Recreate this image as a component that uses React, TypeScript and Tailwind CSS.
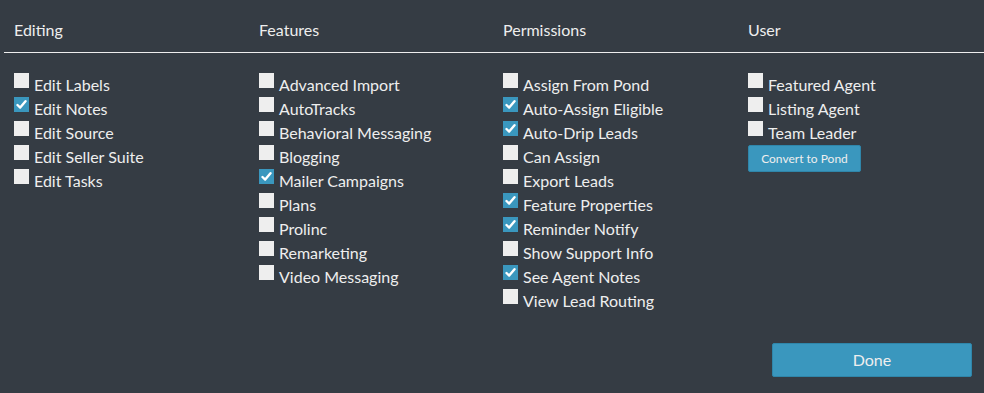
import React from "react";

const columns: { title: string; items: [string, boolean][] }[] = [
  {
    title: "Editing",
    items: [
      ["Edit Labels", false],
      ["Edit Notes", true],
      ["Edit Source", false],
      ["Edit Seller Suite", false],
      ["Edit Tasks", false],
    ],
  },
  {
    title: "Features",
    items: [
      ["Advanced Import", false],
      ["AutoTracks", false],
      ["Behavioral Messaging", false],
      ["Blogging", false],
      ["Mailer Campaigns", true],
      ["Plans", false],
      ["Prolinc", false],
      ["Remarketing", false],
      ["Video Messaging", false],
    ],
  },
  {
    title: "Permissions",
    items: [
      ["Assign From Pond", false],
      ["Auto-Assign Eligible", true],
      ["Auto-Drip Leads", true],
      ["Can Assign", false],
      ["Export Leads", false],
      ["Feature Properties", true],
      ["Reminder Notify", true],
      ["Show Support Info", false],
      ["See Agent Notes", true],
      ["View Lead Routing", false],
    ],
  },
  {
    title: "User",
    items: [
      ["Featured Agent", false],
      ["Listing Agent", false],
      ["Team Leader", false],
    ],
  },
];

function Box({ checked }: { checked: boolean }) {
  if (!checked) return <span className="block w-[15px] h-[15px] bg-[#eeeeee] shrink-0" />;
  return (
    <span className="flex items-center justify-center w-[15px] h-[15px] bg-[#3a97be] shrink-0">
      <svg width="11" height="11" viewBox="0 0 11 11">
        <path d="M1.5 6 L4.2 8.6 L9.5 2.2" fill="none" stroke="#ffffff" strokeWidth="2.4" strokeLinecap="round" strokeLinejoin="round" />
      </svg>
    </span>
  );
}

export default function App() {
  return (
    <div className="w-[984px] h-[393px] bg-[#353c44] text-[#eeeeee] flex flex-col" style={{ fontFamily: "Lato, 'Open Sans', sans-serif" }}>
      <div className="grid grid-cols-[245px_244px_245px_1fr] pl-[14px] pt-[20px] text-[16px] leading-[20px]">
        {columns.map((c) => (
          <div key={c.title}>{c.title}</div>
        ))}
      </div>
      <div className="ml-[4px] mt-[12px] border-t border-[#eeeeee]" />
      <div className="grid grid-cols-[245px_244px_245px_1fr] pl-[14px] mt-[20px] text-[16px] leading-[24px]">
        {columns.map((c) => (
          <div key={c.title} className="flex flex-col">
            {c.items.map(([label, checked]) => (
              <div key={label} className="flex items-start h-[24px]">
                <Box checked={checked} />
                <span className="ml-[5px]">{label}</span>
              </div>
            ))}
            {c.title === "User" && (
              <button className="w-[113px] h-[27px] bg-[#3a97be] border border-[#2f86aa] rounded-[2px] text-[12px] text-[#eeeeee] leading-none">
                Convert to Pond
              </button>
            )}
          </div>
        ))}
      </div>
      <div className="mt-auto flex justify-end pr-[12px] pb-[16px]">
        <button className="w-[200px] h-[34px] bg-[#3a97be] border border-[#2f86aa] rounded-[2px] text-[16px] text-[#eeeeee]">
          Done
        </button>
      </div>
    </div>
  );
}
